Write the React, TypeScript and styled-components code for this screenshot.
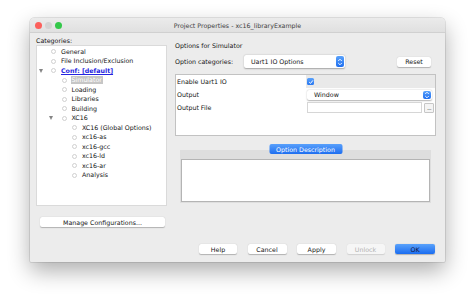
import React from 'react'
import styled, { createGlobalStyle } from 'styled-components'

const GlobalStyle = createGlobalStyle`
  html, body {
    margin: 0;
    padding: 0;
    background: #ffffff;
  }
  body {
    font-family: "DejaVu Sans", "Liberation Sans", sans-serif;
    font-size: 6.3px;
    color: #141414;
  }
`

type TreeNode = {
    label: string
    level: number
    arrow?: boolean
    kind?: 'link' | 'selected'
}

const tree: TreeNode[] = [
    { label: 'General', level: 0 },
    { label: 'File Inclusion/Exclusion', level: 0 },
    { label: 'Conf: [default]', level: 0, arrow: true, kind: 'link' },
    { label: 'Simulator', level: 1, kind: 'selected' },
    { label: 'Loading', level: 1 },
    { label: 'Libraries', level: 1 },
    { label: 'Building', level: 1 },
    { label: 'XC16', level: 1, arrow: true },
    { label: 'XC16 (Global Options)', level: 2 },
    { label: 'xc16-as', level: 2 },
    { label: 'xc16-gcc', level: 2 },
    { label: 'xc16-ld', level: 2 },
    { label: 'xc16-ar', level: 2 },
    { label: 'Analysis', level: 2 },
]

const Stepper = () => (
    <svg width="6" height="8" viewBox="0 0 6 8">
        <path d="M1.2 3 L3 1.2 L4.8 3" fill="none" stroke="#fff" strokeWidth="0.9" />
        <path d="M1.2 5 L3 6.8 L4.8 5" fill="none" stroke="#fff" strokeWidth="0.9" />
    </svg>
)

const App = () => {
    return (
        <Page>
            <GlobalStyle />
            <Window>
                <TitleBar>
                    <Lights>
                        <Light color="#fc605c" />
                        <Light color="#d3d3d3" />
                        <Light color="#34c84a" />
                    </Lights>
                    <Title>Project Properties - xc16_libraryExample</Title>
                    <span />
                </TitleBar>
                <Body>
                    <LeftColumn>
                        <Label>Categories:</Label>
                        <TreePanel>
                            {tree.map((node) => (
                                <TreeRow key={node.label} level={node.level}>
                                    <ArrowSlot>{node.arrow && <Arrow />}</ArrowSlot>
                                    <Bullet />
                                    <TreeText kind={node.kind}>{node.label}</TreeText>
                                </TreeRow>
                            ))}
                        </TreePanel>
                        <ManageButton>Manage Configurations...</ManageButton>
                    </LeftColumn>
                    <RightColumn>
                        <Heading>Options for Simulator</Heading>
                        <CategoryRow>
                            <CategoryLabel>Option categories:</CategoryLabel>
                            <Select width={101} height={13}>
                                <SelectText>Uart1 IO Options</SelectText>
                                <StepperBox>
                                    <Stepper />
                                </StepperBox>
                            </Select>
                            <ResetButton>Reset</ResetButton>
                        </CategoryRow>
                        <PropTable>
                            <PropRow>
                                <PropName>Enable Uart1 IO</PropName>
                                <PropValue shaded>
                                    <Checkbox>
                                        <svg width="6" height="6" viewBox="0 0 6 6">
                                            <path d="M1.2 3.1 L2.5 4.4 L4.9 1.4" fill="none" stroke="#fff" strokeWidth="1" />
                                        </svg>
                                    </Checkbox>
                                </PropValue>
                            </PropRow>
                            <PropRow>
                                <PropName>Output</PropName>
                                <PropValue>
                                    <Select width={125} height={10}>
                                        <SelectText>Window</SelectText>
                                        <StepperBox>
                                            <Stepper />
                                        </StepperBox>
                                    </Select>
                                </PropValue>
                            </PropRow>
                            <PropRow>
                                <PropName>Output File</PropName>
                                <PropValue>
                                    <TextField />
                                    <DotsButton>...</DotsButton>
                                </PropValue>
                            </PropRow>
                        </PropTable>
                        <DescSection>
                            <DescTab>Option Description</DescTab>
                            <DescPanel>
                                <DescBox />
                            </DescPanel>
                        </DescSection>
                    </RightColumn>
                </Body>
                <Footer>
                    <Button width={38}>Help</Button>
                    <Button width={39}>Cancel</Button>
                    <Button width={39}>Apply</Button>
                    <Button width={38} disabled>Unlock</Button>
                    <Button width={40} primary>OK</Button>
                </Footer>
            </Window>
        </Page>
    )
}

export default App

const Page = styled.div`
    width: 474px;
    height: 302px;
    box-sizing: border-box;
    padding: 18px 0 0 30px;
    overflow: hidden;
    background: #ffffff;
`

const Window = styled.div`
    display: flex;
    flex-direction: column;
    width: 415px;
    height: 244px;
    background: #ececec;
    border-radius: 4px 4px 1px 1px;
    box-shadow: 0 9px 22px rgba(0, 0, 0, 0.32), 0 0 0 0.5px rgba(0, 0, 0, 0.18);
    overflow: hidden;
`

const TitleBar = styled.div`
    display: grid;
    grid-template-columns: 1fr auto 1fr;
    align-items: center;
    height: 15px;
    flex-shrink: 0;
    box-sizing: border-box;
    background: linear-gradient(#ebebeb, #e0e0e0);
    border-bottom: 1px solid #d0d0d0;
`

const Lights = styled.div`
    display: flex;
    gap: 3px;
    padding-left: 5px;
`

const Light = styled.span<{ color: string }>`
    width: 7px;
    height: 7px;
    border-radius: 50%;
    background: ${(p) => p.color};
`

const Title = styled.div`
    color: #404040;
    white-space: nowrap;
`

const Body = styled.div`
    display: flex;
    flex: 1;
    min-height: 0;
    padding-left: 6px;
`

const LeftColumn = styled.div`
    display: flex;
    flex-direction: column;
    width: 131px;
    padding-top: 3px;
`

const Label = styled.div`
    height: 9px;
    line-height: 9px;
`

const TreePanel = styled.div`
    height: 161px;
    box-sizing: border-box;
    padding-top: 1px;
    background: #ffffff;
    border: 0.5px solid #dadada;
`

const TreeRow = styled.div<{ level: number }>`
    display: flex;
    align-items: center;
    height: 9.5px;
    padding-left: ${(p) => 1 + p.level * 10.5}px;
    white-space: nowrap;
`

const ArrowSlot = styled.span`
    display: flex;
    justify-content: center;
    width: 5px;
    margin-right: 8px;
`

const Arrow = styled.span`
    width: 0;
    height: 0;
    border-left: 2.5px solid transparent;
    border-right: 2.5px solid transparent;
    border-top: 4px solid #858585;
`

const Bullet = styled.span`
    width: 3px;
    height: 3px;
    border-radius: 50%;
    border: 1px solid #d0d0d0;
    margin-right: 5px;
`

const TreeText = styled.span<{ kind?: 'link' | 'selected' }>`
    line-height: 8px;
    padding: 0 1px;
    margin-left: -1px;
    color: ${(p) => (p.kind === 'link' ? '#2424e0' : p.kind === 'selected' ? '#ffffff' : '#141414')};
    background: ${(p) => (p.kind === 'selected' ? '#c6c6c6' : 'transparent')};
    font-weight: ${(p) => (p.kind === 'link' ? 700 : 400)};
    text-decoration: ${(p) => (p.kind === 'link' ? 'underline' : 'none')};
`

const ManageButton = styled.div`
    display: flex;
    align-items: center;
    justify-content: center;
    width: 125px;
    height: 10px;
    margin: 11px 0 0 4px;
    background: #ffffff;
    border-radius: 2px;
    box-shadow: 0 0.5px 1px rgba(0, 0, 0, 0.25);
`

const RightColumn = styled.div`
    display: flex;
    flex-direction: column;
    width: 261px;
    margin-left: 8px;
    padding-top: 8px;
`

const Heading = styled.div`
    height: 9px;
    line-height: 9px;
`

const CategoryRow = styled.div`
    display: flex;
    align-items: center;
    height: 13px;
    margin-top: 5px;
    padding-right: 5px;
`

const CategoryLabel = styled.div`
    width: 69px;
`

const Select = styled.div<{ width: number; height: number }>`
    display: flex;
    align-items: center;
    justify-content: space-between;
    width: ${(p) => p.width}px;
    height: ${(p) => p.height}px;
    box-sizing: border-box;
    padding: 1px;
    background: #ffffff;
    border-radius: 2px;
    box-shadow: 0 0.5px 1.5px rgba(0, 0, 0, 0.3);
`

const SelectText = styled.span`
    padding-left: 6px;
`

const StepperBox = styled.span`
    display: flex;
    align-items: center;
    justify-content: center;
    width: 8px;
    height: 100%;
    border-radius: 2px;
    background: linear-gradient(#5aa2fb, #1f6ff0);
`

const ResetButton = styled.div`
    display: flex;
    align-items: center;
    justify-content: center;
    width: 34px;
    height: 10px;
    margin-left: auto;
    background: #ffffff;
    border-radius: 2px;
    box-shadow: 0 0.5px 1px rgba(0, 0, 0, 0.25);
`

const PropTable = styled.div`
    display: flex;
    flex-direction: column;
    height: 62px;
    margin-top: 6px;
    box-sizing: border-box;
    background: #ffffff;
    border: 1px solid #c2c2c2;
`

const PropRow = styled.div`
    display: grid;
    grid-template-columns: 130px 1fr;
    height: 13px;
`

const PropName = styled.div`
    display: flex;
    align-items: center;
    padding-left: 1px;
`

const PropValue = styled.div<{ shaded?: boolean }>`
    display: flex;
    align-items: center;
    gap: 2px;
    padding: 0 1px;
    background: ${(p) => (p.shaded ? '#e9e9e9' : 'transparent')};
`

const Checkbox = styled.span`
    display: flex;
    align-items: center;
    justify-content: center;
    width: 7px;
    height: 7px;
    border-radius: 1.5px;
    background: linear-gradient(#5aa2fb, #2a78f1);
`

const TextField = styled.div`
    width: 115px;
    height: 11px;
    box-sizing: border-box;
    border: 1px solid #d6d6d6;
    background: #ffffff;
`

const DotsButton = styled.div`
    display: flex;
    align-items: center;
    justify-content: center;
    width: 10px;
    height: 10px;
    box-sizing: border-box;
    font-size: 6px;
    line-height: 6px;
    letter-spacing: -0.5px;
    color: #444;
    background: #f4f4f4;
    border: 0.5px solid #c6c6c6;
    border-radius: 1px;
`

const DescSection = styled.div`
    position: relative;
    display: flex;
    flex-direction: column;
    margin: 14px 5px 0 5px;
`

const DescTab = styled.div`
    position: absolute;
    top: -6px;
    left: 50%;
    transform: translateX(-50%);
    display: flex;
    align-items: center;
    justify-content: center;
    width: 73px;
    height: 10px;
    color: #ffffff;
    border-radius: 2px;
    background: linear-gradient(#59a0fb, #1e6ef0);
    white-space: nowrap;
`

const DescPanel = styled.div`
    height: 53px;
    box-sizing: border-box;
    padding: 9px 1px 1px 1px;
    background: #dedede;
`

const DescBox = styled.div`
    height: 100%;
    box-sizing: border-box;
    background: #ffffff;
    border: 1px solid #b4b4b4;
`

const Footer = styled.div`
    display: flex;
    justify-content: flex-end;
    align-items: flex-end;
    gap: 10.5px;
    height: 18px;
    flex-shrink: 0;
    box-sizing: border-box;
    padding: 0 10px 8px 0;
`

const Button = styled.div<{ width: number; primary?: boolean; disabled?: boolean }>`
    display: flex;
    align-items: center;
    justify-content: center;
    width: ${(p) => p.width}px;
    height: 10px;
    border-radius: 2px;
    color: ${(p) => (p.disabled ? '#b0b0b0' : p.primary ? '#14143a' : '#141414')};
    background: ${(p) =>
        p.primary ? 'linear-gradient(#5aa2fb, #1a6cf0)' : p.disabled ? '#f6f6f6' : '#ffffff'};
    box-shadow: 0 0.5px 1px rgba(0, 0, 0, ${(p) => (p.disabled ? 0.12 : 0.25)});
`
